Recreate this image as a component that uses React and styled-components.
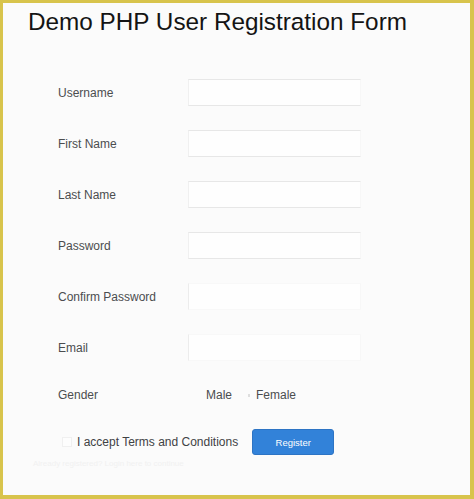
import React from "react";
import styled, { createGlobalStyle } from "styled-components";

const Global = createGlobalStyle`
  html, body { margin: 0; padding: 0; background: #fbfbfb; }
  * { box-sizing: border-box; }
`;

const Frame = styled.div`
  width: 474px;
  height: 499px;
  background: #fbfbfb;
  border-style: solid;
  border-color: #d8c44c;
  border-width: 3px 4px 4px 3px;
  font-family: "Liberation Sans", Arial, sans-serif;
  overflow: hidden;
`;

const Title = styled.h1`
  margin: 0;
  padding: 7px 0 0 25px;
  font-size: 24.3px;
  line-height: 24px;
  font-weight: 400;
  color: #141414;
`;

const Form = styled.form`
  margin-top: 33px;
  padding-left: 55px;
  display: flex;
  flex-direction: column;
`;

const Row = styled.div`
  display: grid;
  grid-template-columns: 130px auto;
  align-items: center;
  height: ${(p) => p.$h || 51}px;
`;

const Label = styled.label`
  font-size: 12px;
  color: #4b4d4f;
`;

const Input = styled.input`
  width: 173px;
  height: 27px;
  margin: 0;
  padding: 0 6px;
  background: #fefefe;
  border: 1px solid ${(p) => (p.$faint ? "#f8f8f8" : "#e7e7e7")};
  border-left-color: ${(p) => (p.$faint ? "#ececec" : "#f0f0f0")};
  border-right-color: #f7f7f7;
  outline: none;
  font-family: inherit;
`;

const Options = styled.div`
  display: flex;
  align-items: center;
  padding-left: 18px;
  font-size: 12px;
  color: #4b4d4f;
`;

const Dot = styled.span`
  width: 2px;
  height: 3px;
  margin: 0 6px 0 16px;
  background: #dedede;
`;

const TermsRow = styled.div`
  display: flex;
  align-items: center;
  height: 26px;
  margin-top: 12px;
  padding-left: 4px;
`;

const Check = styled.span`
  width: 10px;
  height: 10px;
  border: 1px solid #f0f0f0;
  background: #fdfdfd;
  margin-right: 5px;
`;

const Terms = styled.span`
  font-size: 12px;
  color: #3f4244;
  margin-right: 14px;
`;

const Button = styled.button`
  width: 82px;
  height: 26px;
  border: 1px solid #2d74c4;
  border-radius: 3px;
  background: #3282d9;
  color: #fff;
  font-family: inherit;
  font-size: 9.5px;
  padding: 0;
`;

const Note = styled.div`
  margin: 4px 0 0 -25px;
  font-size: 8px;
  line-height: 9px;
  color: #f1f1f1;
`;

export default function App() {
  const fields = [
    ["Username", "text", false],
    ["First Name", "text", false],
    ["Last Name", "text", false],
    ["Password", "password", false],
    ["Confirm Password", "password", true],
    ["Email", "email", true],
  ];
  return (
    <Frame>
      <Global />
      <Title>Demo PHP User Registration Form</Title>
      <Form onSubmit={(e) => e.preventDefault()}>
        {fields.map(([label, type, faint]) => (
          <Row key={label}>
            <Label>{label}</Label>
            <Input type={type} $faint={faint} />
          </Row>
        ))}
        <Row $h={44}>
          <Label>Gender</Label>
          <Options>
            <span>Male</span>
            <Dot />
            <span>Female</span>
          </Options>
        </Row>
        <TermsRow>
          <Check />
          <Terms>I accept Terms and Conditions</Terms>
          <Button type="submit">Register</Button>
        </TermsRow>
        <Note>Already registered? Login here to continue</Note>
      </Form>
    </Frame>
  );
}
